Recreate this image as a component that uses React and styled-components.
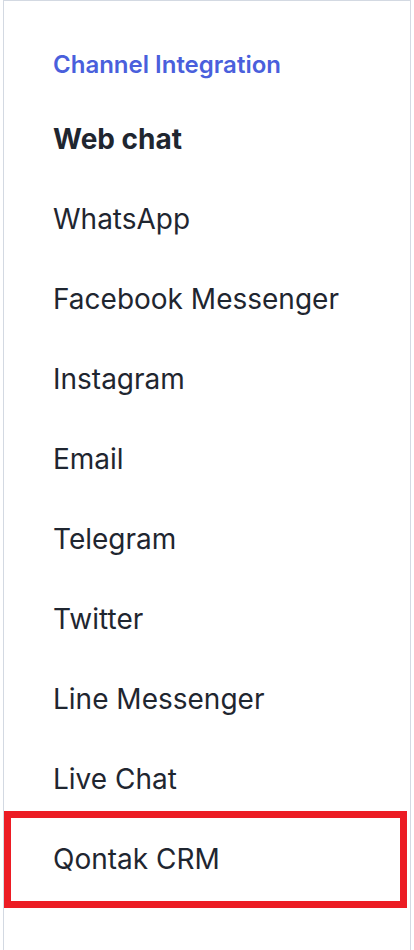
import React from "react";
import styled, { createGlobalStyle } from "styled-components";

const Global = createGlobalStyle`
  html, body { margin: 0; padding: 0; background: #ffffff; }
  body { font-family: Inter, "Noto Sans", sans-serif; -webkit-font-smoothing: antialiased; }
`;

const Panel = styled.nav`
  margin-left: 3px;
  width: 408px;
  min-height: 950px;
  box-sizing: border-box;
  border: 1px solid #d3d9e2;
  border-bottom: none;
  background: #fff;
`;

const Heading = styled.div`
  height: 98px;
  display: flex;
  align-items: center;
  padding: 0 0 0 49px;
  box-sizing: border-box;
  padding-top: 28px;
  font-size: 24px;
  font-weight: 600;
  color: #4a5fdc;
`;

const List = styled.ul`
  list-style: none;
  margin: 0;
  padding: 0;
`;

const Item = styled.li`
  position: relative;
  height: 80px;
  display: flex;
  align-items: center;
  padding-left: 49px;
  font-size: 28px;
  font-weight: ${(p) => (p.$active ? 700 : 400)};
  color: #1f2630;
`;

const Highlight = styled.span`
  position: absolute;
  left: 0;
  right: 3px;
  top: -8px;
  bottom: -9px;
  border: 7px solid #ec1c24;
  pointer-events: none;
`;

const items = [
  "Web chat",
  "WhatsApp",
  "Facebook Messenger",
  "Instagram",
  "Email",
  "Telegram",
  "Twitter",
  "Line Messenger",
  "Live Chat",
  "Qontak CRM",
];

export default function App() {
  return (
    <>
      <Global />
      <Panel>
        <Heading>Channel Integration</Heading>
        <List>
          {items.map((name, i) => (
            <Item key={name} $active={i === 0}>
              {name}
              {name === "Qontak CRM" && <Highlight />}
            </Item>
          ))}
        </List>
      </Panel>
    </>
  );
}
